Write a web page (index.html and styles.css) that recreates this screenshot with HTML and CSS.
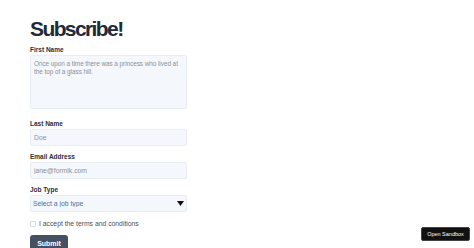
FILE: index.html
```html
<!DOCTYPE html>
<html lang="en">
<head>
    <meta charset="UTF-8">
    <meta name="viewport" content="width=device-width, initial-scale=1.0">
    <title>Subscribe</title>
    <link rel="stylesheet" href="styles.css">
</head>
<body>
    <div class="container">
        <h1>Subscribe!</h1>
        <form id="subscribeForm">
            <div class="form-group form-group-text">
                <label for="firstName">First Name</label>
                <textarea id="firstName" placeholder="Once upon a time there was a princess who lived at the top of a glass hill."></textarea>
            </div>
            <div class="form-group">
                <label for="lastName">Last Name</label>
                <input id="lastName" type="text" placeholder="Doe">
            </div>
            <div class="form-group">
                <label for="email">Email Address</label>
                <input id="email" type="email" placeholder="jane@formik.com">
            </div>
            <div class="form-group">
                <label for="jobType">Job Type</label>
                <div class="select-wrap">
                    <select id="jobType">
                        <option value="">Select a job type</option>
                        <option value="designer">Designer</option>
                        <option value="development">Developer</option>
                        <option value="product">Product Manager</option>
                        <option value="other">Other</option>
                    </select>
                    <svg class="select-arrow" width="7" height="5" viewBox="0 0 7 5"><path d="M0 0h7L3.5 5z" fill="#111"/></svg>
                </div>
            </div>
            <label class="checkbox">
                <input type="checkbox" id="accept">
                <span>I accept the terms and conditions</span>
            </label>
            <button type="submit">Submit</button>
        </form>
    </div>

    <a class="sandbox-btn" href="#">Open Sandbox</a>
</body>
</html>
```

FILE: styles.css
```css
body {
    font-family: "Liberation Sans", Arial, sans-serif;
    margin: 0;
    background: #fff;
    color: #1f2633;
}
.container {
    padding: 0 0 0 30px;
    width: 157px;
}
h1 {
    font-size: 21px;
    letter-spacing: -1.6px;
    line-height: 24px;
    margin: 17px 0 5px 0;
    color: #232a36;
}
.form-group {
    margin-bottom: 7px;
}
.form-group-text {
    margin-bottom: 11px;
}
label {
    display: block;
    font-size: 6.5px;
    font-weight: bold;
    line-height: 8px;
    margin-bottom: 1px;
    color: #2a303b;
}
input, select, textarea {
    display: block;
    box-sizing: border-box;
    width: 157px;
    font-family: inherit;
    font-size: 6.8px;
    background: #f4f8fc;
    border: 1px solid #e9eef4;
    border-radius: 2px;
    margin: 0;
    color: #333;
    outline: none;
}
input {
    height: 17px;
    padding: 0 3px;
}
textarea {
    height: 54px;
    padding: 4px 2px 4px 3px;
    font-size: 6.4px;
    letter-spacing: -0.05px;
    line-height: 8px;
    overflow: hidden;
    resize: none;
}
::placeholder {
    color: #8b9098;
}
.select-wrap {
    position: relative;
}
select {
    height: 17px;
    padding: 0 2px;
    appearance: none;
    color: #4b6ea0;
}
.select-arrow {
    position: absolute;
    right: 3px;
    top: 6px;
    pointer-events: none;
}
.checkbox {
    display: flex;
    align-items: center;
    font-size: 6.8px;
    font-weight: normal;
    color: #4a4f57;
    height: 10px;
    margin: 0 0 6px 0;
}
.checkbox input {
    width: 6px;
    height: 6px;
    margin: 0 3px 0 0;
    padding: 0;
    appearance: none;
    background: #fff;
    border: 1px solid #d8dce2;
    border-radius: 1px;
}
button {
    display: block;
    font-family: inherit;
    font-size: 7px;
    font-weight: bold;
    background-color: #465063;
    color: white;
    border: none;
    border-radius: 3px;
    width: 38px;
    height: 17px;
    padding: 0;
    cursor: pointer;
}
button:hover {
    background-color: #3b4454;
}
.sandbox-btn {
    position: fixed;
    right: 4px;
    bottom: 7px;
    width: 49px;
    height: 14px;
    box-sizing: border-box;
    background: #111;
    border: 1px solid #444;
    border-radius: 2px;
    color: #fff;
    font-size: 5.5px;
    line-height: 12px;
    text-align: center;
    text-decoration: none;
}
```
